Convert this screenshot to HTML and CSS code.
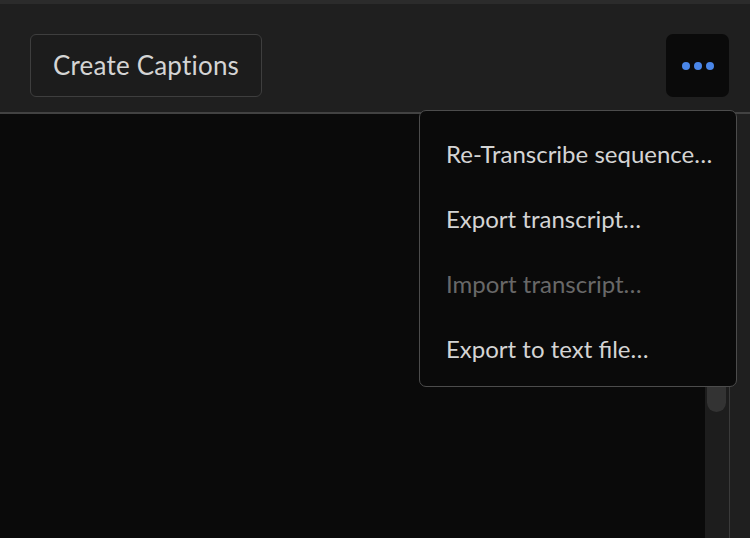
FILE: index.html
```html
<!DOCTYPE html>
<html lang="en">

<head>
  <meta charset="UTF-8">
  <meta name="viewport" content="width=device-width, initial-scale=1.0">
  <title>Text</title>
  <link rel="stylesheet" href="styles.css">
</head>

<body>
  <div class="top-strip"></div>

  <header class="toolbar">
    <button class="create-btn" type="button">Create Captions</button>
    <button class="more-btn" type="button" aria-label="More">
      <svg width="32" height="10" viewBox="0 0 32 10">
        <circle cx="4" cy="5" r="4" fill="#4a86e8" />
        <circle cx="16" cy="5" r="4" fill="#4a86e8" />
        <circle cx="28" cy="5" r="4" fill="#4a86e8" />
      </svg>
    </button>
  </header>

  <div class="panel">
    <div class="transcript"></div>
    <div class="scroll-track">
      <div class="scroll-thumb"></div>
    </div>
    <div class="gutter"></div>
  </div>

  <ul class="menu">
    <li class="menu-item">Re-Transcribe sequence…</li>
    <li class="menu-item">Export transcript…</li>
    <li class="menu-item disabled">Import transcript…</li>
    <li class="menu-item">Export to text file…</li>
  </ul>
</body>

</html>
```

FILE: styles.css
```css
:root {
  --bg-dark: #0a0a0a;
  --bg-header: #1f1f1f;
  --text-color: #d4d4d4;
  --text-disabled: #686868;
}

html,
body {
  height: 100%;
}

body {
  background-color: var(--bg-dark);
  color: var(--text-color);
  font-family: Lato, "Open Sans", sans-serif;
  margin: 0;
  overflow: hidden;
  display: flex;
  flex-direction: column;
}

.top-strip {
  height: 4px;
  background-color: #2b2b2b;
  flex-shrink: 0;
}

.toolbar {
  height: 110px;
  box-sizing: border-box;
  background-color: var(--bg-header);
  border-bottom: 2px solid #424242;
  display: flex;
  justify-content: space-between;
  align-items: flex-start;
  padding: 30px 21px 0 30px;
  flex-shrink: 0;
}

.create-btn {
  height: 63px;
  width: 232px;
  background-color: #1c1c1c;
  border: 1px solid #3e3e3e;
  border-radius: 6px;
  color: var(--text-color);
  font-family: inherit;
  font-size: 26px;
  padding: 0 0 2px 0;
  letter-spacing: 0.2px;
}

.more-btn {
  width: 63px;
  height: 63px;
  background-color: var(--bg-dark);
  border: none;
  border-radius: 7px;
  display: flex;
  align-items: center;
  justify-content: center;
  padding: 0;
}

.panel {
  flex: 1;
  display: flex;
}

.transcript {
  flex: 1;
  background-color: var(--bg-dark);
}

.scroll-track {
  width: 25px;
  background-color: #1d1d1d;
  border-right: 1px solid #3a3a3a;
  padding: 0 3px 0 2px;
  box-sizing: border-box;
}

.scroll-thumb {
  height: 298px;
  background-color: #333;
  border-radius: 0 0 10px 10px;
}

.gutter {
  width: 20px;
  background-color: var(--bg-header);
}

.menu {
  position: absolute;
  left: 419px;
  top: 110px;
  width: 318px;
  height: 277px;
  box-sizing: border-box;
  margin: 0;
  padding: 10px 0 0 0;
  list-style: none;
  background-color: var(--bg-dark);
  border: 1px solid #4c4c4c;
  border-radius: 7px;
}

.menu-item {
  height: 65px;
  line-height: 65px;
  padding-left: 26px;
  font-size: 24px;
  white-space: nowrap;
}

.menu-item.disabled {
  color: var(--text-disabled);
}
```
